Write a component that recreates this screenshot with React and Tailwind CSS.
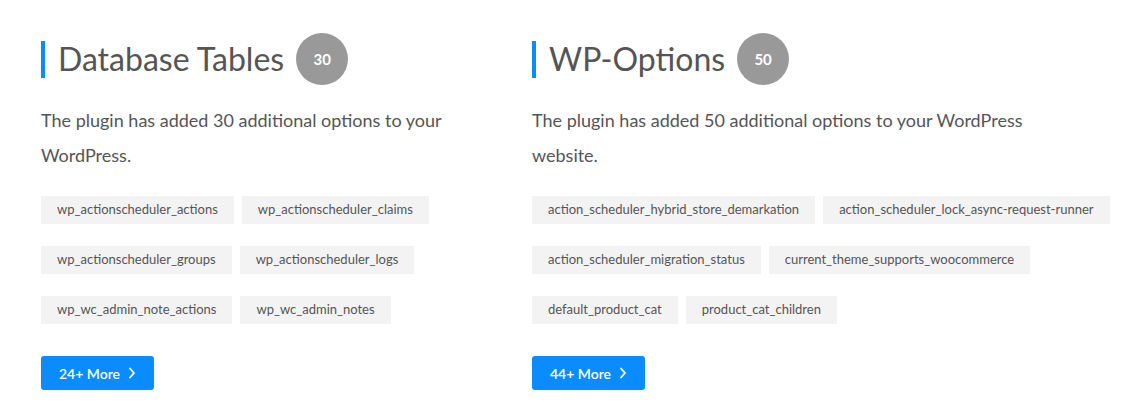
import React from "react";

const font = { fontFamily: "Lato, 'Noto Sans', sans-serif" };

function Tag({ children }) {
  return (
    <span className="inline-flex h-[28px] items-center bg-[#f3f3f3] px-4 text-[13px] text-[#555]">
      {children}
    </span>
  );
}

function Section({ title, count, text, rows, more, pWidth }) {
  return (
    <div className="flex flex-col">
      <div className="flex items-center">
        <div className="h-[37px] w-[4px] bg-[#0a8cff]" />
        <h2 className="ml-[13px] text-[32px] leading-none text-[#555]">{title}</h2>
        <div className="ml-[12px] flex h-[52px] w-[52px] items-center justify-center rounded-full bg-[#999] text-[15px] font-bold text-white">
          {count}
        </div>
      </div>
      <p className={`mt-[18px] text-[18px] leading-[35px] text-[#555] ${pWidth}`}>{text}</p>
      <div className="mt-[23px] flex flex-col gap-[22px]">
        {rows.map((row, i) => (
          <div key={i} className="flex gap-2">
            {row.map((t) => (
              <Tag key={t}>{t}</Tag>
            ))}
          </div>
        ))}
      </div>
      <div className="mt-[32px]">
        <button className="inline-flex h-[34px] w-[113px] items-center justify-center gap-2 rounded-[3px] bg-[#0a8cff] text-[14px] font-semibold text-white">
          {more}
          <svg width="8" height="12" viewBox="0 0 8 12" fill="none">
            <path d="M2 1.5L6 6L2 10.5" stroke="white" strokeWidth="1.8" strokeLinecap="round" strokeLinejoin="round" />
          </svg>
        </button>
      </div>
    </div>
  );
}

export default function App() {
  return (
    <div className="min-h-[411px] w-[1134px] bg-white pl-[41px] pt-[33px]" style={font}>
      <div className="flex">
        <div className="w-[491px] shrink-0">
          <Section
            title="Database Tables"
            count="30"
            pWidth="max-w-[440px]"
            text="The plugin has added 30 additional options to your WordPress."
            rows={[
              ["wp_actionscheduler_actions", "wp_actionscheduler_claims"],
              ["wp_actionscheduler_groups", "wp_actionscheduler_logs"],
              ["wp_wc_admin_note_actions", "wp_wc_admin_notes"],
            ]}
            more="24+ More"
          />
        </div>
        <div className="flex-1">
          <Section
            title="WP-Options"
            count="50"
            pWidth="max-w-[520px]"
            text="The plugin has added 50 additional options to your WordPress website."
            rows={[
              ["action_scheduler_hybrid_store_demarkation", "action_scheduler_lock_async-request-runner"],
              ["action_scheduler_migration_status", "current_theme_supports_woocommerce"],
              ["default_product_cat", "product_cat_children"],
            ]}
            more="44+ More"
          />
        </div>
      </div>
    </div>
  );
}
